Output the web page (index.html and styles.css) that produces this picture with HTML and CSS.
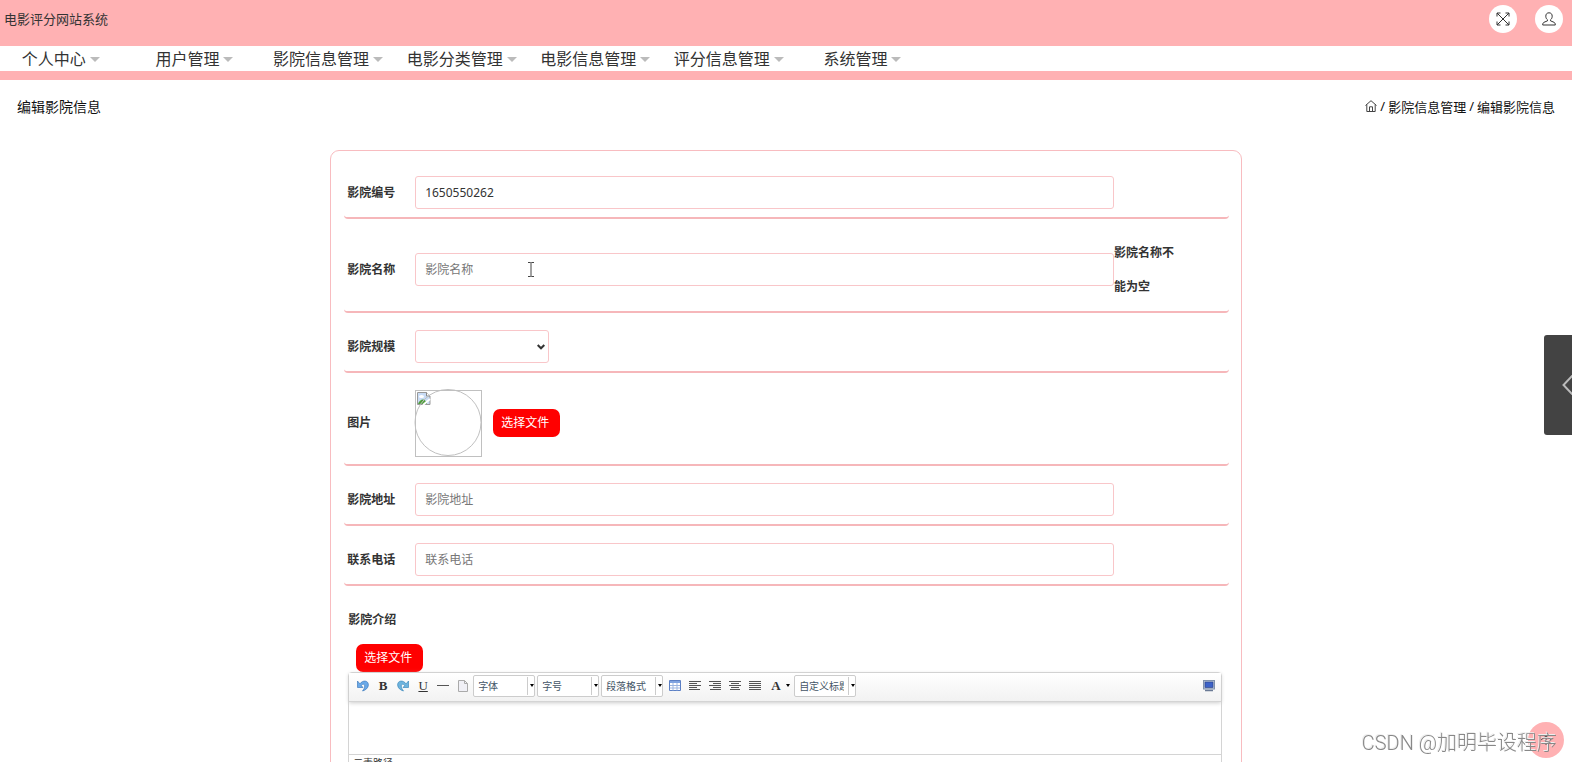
FILE: index.html
```html
<!DOCTYPE html>
<html lang="zh-CN">
<head>
<meta charset="utf-8">
<title>电影评分网站系统</title>
<link rel="stylesheet" href="styles.css">
</head>
<body>
<header class="topbar">
  <span class="brand">电影评分网站系统</span>
  <div class="top-actions">
    <button class="round-btn" type="button" aria-label="全屏">
      <svg width="14" height="14" viewBox="0 0 14 14" fill="none" stroke="#333"><path d="M1 1l12 12M13 1L1 13M1 4.500V1h3.500M9.500 1H13v3.500M13 9.500V13H9.500M4.500 13H1V9.500"/></svg>
    </button>
    <button class="round-btn" type="button" aria-label="用户">
      <svg width="14" height="14" viewBox="0 0 14 14" fill="none" stroke="#333"><path d="M7 .8c-2 0-3.200 1.300-3.200 3.400 0 1.600.7 2.900 1.700 3.600v1L2 10.300C1 10.800.7 11.700.7 13h12.600c0-1.300-.3-2.200-1.300-2.700L8.500 8.800v-1c1-.7 1.700-2 1.700-3.600C10.200 2.100 9 .8 7 .8z"/></svg>
    </button>
  </div>
</header>
<nav class="menu">
  <a class="menu-item" href="#">个人中心</a>
  <a class="menu-item" href="#">用户管理</a>
  <a class="menu-item" href="#">影院信息管理</a>
  <a class="menu-item" href="#">电影分类管理</a>
  <a class="menu-item" href="#">电影信息管理</a>
  <a class="menu-item" href="#">评分信息管理</a>
  <a class="menu-item" href="#">系统管理</a>
</nav>
<div class="page-head">
  <h1 class="page-title">编辑影院信息</h1>
  <div class="crumbs">
    <a href="#" aria-label="首页"><svg width="12" height="12" viewBox="0 0 12 12" fill="none" stroke="#444"><path d="M.5 5.500L6 .7l5.500 4.800M1.800 4.500v7h8.400v-7M4.500 11.500V6.800h3v4.700"/></svg></a>
    <span>/</span>
    <a href="#">影院信息管理</a>
    <span>/</span>
    <span>编辑影院信息</span>
  </div>
</div>
<form class="card">
  <div class="row">
    <label class="label" for="no">影院编号</label>
    <input class="field" id="no" type="text" value="1650550262">
  </div>
  <div class="row">
    <label class="label" for="name">影院名称</label>
    <div class="field-wrap">
      <input class="field" id="name" type="text" placeholder="影院名称">
      <svg class="ibeam" width="8" height="15" viewBox="0 0 8 15" fill="none" stroke="#444"><path d="M1 .5h2.500l.5.500.5-.500H7M4 1v13M1 14.500h2.500l.5-.500.5.500H7"/></svg>
    </div>
    <span class="error">影院名称不能为空</span>
  </div>
  <div class="row">
    <label class="label" for="scale">影院规模</label>
    <div class="select-wrap">
      <select class="select" id="scale"><option></option></select>
      <svg class="chevron" width="8" height="6" viewBox="0 0 8 6" fill="none" stroke="#333" stroke-width="2"><path d="M.7 1L4 4.300 7.300 1"/></svg>
    </div>
  </div>
  <div class="row">
    <span class="label">图片</span>
    <svg class="thumb" width="67" height="67" viewBox="0 0 67 67" fill="none">
      <rect x=".5" y=".5" width="66" height="66" stroke="#c0c0c0"/>
      <path d="M2.500 2.500h9l3.500 3.500v8.500H2.500z" fill="#c9dcf6" stroke="#999"/>
      <path d="M11.500 2.500V6H15" fill="#fff" stroke="#888"/>
      <ellipse cx="6.500" cy="6.500" rx="2.500" ry="1.500" fill="#fff"/>
      <path d="M3 14c1-3 3-4.500 5-4.500S11 11 12 14z" fill="#4f9e3c"/>
      <path d="M8 15l7-6" stroke="#fff" stroke-width="2"/>
      <circle cx="33" cy="32.500" r="33" stroke="#c0c0c0"/>
    </svg>
    <button class="file-btn" type="button">选择文件</button>
  </div>
  <div class="row">
    <label class="label" for="addr">影院地址</label>
    <input class="field" id="addr" type="text" placeholder="影院地址">
  </div>
  <div class="row">
    <label class="label" for="tel">联系电话</label>
    <input class="field" id="tel" type="text" placeholder="联系电话">
  </div>
  <div class="intro">
    <label class="intro-label" for="intro">影院介绍</label>
    <button class="file-btn intro-btn" type="button">选择文件</button>
    <div class="editor">
      <div class="toolbar">
        <button class="tool" type="button" aria-label="撤销"><svg width="12" height="12" viewBox="0 0 12 12"><path d="M.5 1v6.500h5.500L4.300 5.600C5.500 3.600 7.800 4 7.700 6c-.1 2-1 3.500-2.200 5 3-.8 5.700-2.800 5.900-6C11.500.5 6-.5 2.900 3.800z" fill="#6aa9e8" stroke="#2f6fb5" stroke-width=".6"/></svg></button>
        <button class="tool tool-text" type="button"><b>B</b></button>
        <button class="tool" type="button" aria-label="重做"><svg width="12" height="12" viewBox="0 0 12 12"><path d="M11.500 1v6.500H6l1.700-1.900C6.500 3.600 4.200 4 4.300 6c.1 2 1 3.500 2.200 5C3.500 10.200.8 8.200.6 5 .5.5 6-.5 9.100 3.800z" fill="#6fb4de" stroke="#2f7fb5" stroke-width=".6"/></svg></button>
        <button class="tool tool-text" type="button"><u>U</u></button>
        <button class="tool" type="button" aria-label="分隔线"><svg width="12" height="12" viewBox="0 0 12 12"><path d="M0 5.500h12" stroke="#555"/></svg></button>
        <button class="tool" type="button" aria-label="新建"><svg width="12" height="12" viewBox="0 0 12 12"><path d="M1.500.5h6l3 3v8h-9z" fill="#f0f0f6" stroke="#aaa"/><path d="M7.500.5v3h3" fill="none" stroke="#aaa"/></svg></button>
        <span class="combo"><select aria-label="字体"><option>字体</option></select></span>
        <span class="combo"><select aria-label="字号"><option>字号</option></select></span>
        <span class="combo"><select aria-label="段落格式"><option>段落格式</option></select></span>
        <button class="tool" type="button" aria-label="表格"><svg width="12" height="12" viewBox="0 0 12 12"><path d="M.5.5h11v10H.5z" fill="#fff" stroke="#5b7fc4"/><path d="M1 1h10v2H1z" fill="#7fa3e0"/><path d="M1 5.500h10M1 8h10M4 3v7.500M8 3v7.500" stroke="#9bb5e0"/></svg></button>
        <button class="tool" type="button" aria-label="左对齐"><svg width="12" height="12" viewBox="0 0 12 12"><path d="M0 1.500h12M0 3.500h8M0 5.500h12M0 7.500h8M0 9.500h11" stroke="#555"/></svg></button>
        <button class="tool" type="button" aria-label="右对齐"><svg width="12" height="12" viewBox="0 0 12 12"><path d="M0 1.500h12M4 3.500h8M0 5.500h12M4 7.500h8M1 9.500h11" stroke="#555"/></svg></button>
        <button class="tool" type="button" aria-label="居中"><svg width="12" height="12" viewBox="0 0 12 12"><path d="M0 1.500h12M2 3.500h8M0 5.500h12M2 7.500h8M1 9.500h10" stroke="#555"/></svg></button>
        <button class="tool" type="button" aria-label="两端对齐"><svg width="12" height="12" viewBox="0 0 12 12"><path d="M0 1.500h12M0 3.500h12M0 5.500h12M0 7.500h12M0 9.500h12" stroke="#555"/></svg></button>
        <button class="tool tool-text tool-color" type="button"><b>A</b></button>
        <span class="combo"><select aria-label="自定义标题"><option>自定义标题</option></select></span>
        <button class="tool tool-full" type="button" aria-label="全屏编辑"><svg width="12" height="12" viewBox="0 0 12 12"><rect x=".5" y=".5" width="11" height="8.500" fill="#b9c6da" stroke="#8192ac"/><rect x="2" y="2" width="8" height="5.500" fill="#3c62c8" stroke="#2a3f80" stroke-width=".6"/><path d="M2 10.500h8" stroke="#6a7a95" stroke-width="1.500"/></svg></button>
      </div>
      <textarea class="editor-area" id="intro"></textarea>
      <div class="editor-status">元素路径</div>
    </div>
  </div>
</form>
<button class="side-tab" type="button" aria-label="展开"><svg width="10" height="20" viewBox="0 0 10 20" fill="none" stroke="#bbb" stroke-width="2"><path d="M11 0L1.500 10 11 20"/></svg></button>
<button class="fab" type="button" aria-label="返回顶部"><svg width="16" height="12" viewBox="0 0 16 12" fill="none" stroke="#555"><path d="M0 1.500h16M3 6l5-4 5 4M8 2v9"/></svg></button>
<div class="watermark">CSDN @加明毕设程序</div>
</body>
</html>
```
FILE: styles.css
```css
* { box-sizing: border-box; }

body {
  margin: 0;
  height: 100vh;
  overflow: hidden;
  background: #fff;
  color: #333;
  font-family: "Noto Sans", "Noto Sans CJK SC", sans-serif;
  font-size: 12px;
}

button, input, select, textarea { font: inherit; color: inherit; }
button { border: 0; padding: 0; cursor: pointer; }
a { color: inherit; text-decoration: none; }
svg { display: block; flex: none; }

.topbar {
  display: flex;
  justify-content: space-between;
  align-items: flex-start;
  height: 46px;
  padding: 5px 9px 0 4px;
  background: #ffb1b3;
}
.brand { font-size: 13px; line-height: 28px; }
.top-actions { display: flex; gap: 18px; }
.round-btn {
  display: grid;
  place-items: center;
  width: 28px;
  height: 28px;
  border-radius: 50%;
  background: #fff;
}

.menu {
  display: flex;
  height: 34px;
  border-bottom: 9px solid #ffb1b3;
}
.menu-item {
  display: flex;
  align-items: center;
  justify-content: center;
  gap: 4px;
  width: 8.5%;
  padding: 1px 12px 0 0;
  font-size: 16px;
  line-height: 24px;
  white-space: nowrap;
}
.menu-item::after {
  content: "";
  border: 5px solid transparent;
  border-top-color: #bbb;
  border-bottom: 0;
}

.page-head {
  display: flex;
  justify-content: space-between;
  align-items: center;
  height: 52px;
  padding: 0 17px;
  color: #111;
}
.page-title { margin: 0; font-size: 14px; font-weight: 400; }
.crumbs { display: flex; align-items: center; gap: 3px; font-size: 13px; }

.card {
  width: 58%;
  margin: 18px auto 0;
  padding: 8px 12px 20px 13px;
  border: 1px solid #f8bcc0;
  border-radius: 9px;
}
.row {
  display: flex;
  align-items: center;
  padding: 17px 0 8px;
  border-bottom: 2px solid #f6b7ba;
  border-radius: 4px;
}
.label {
  flex: none;
  width: 71px;
  padding: 0 0 2px 3px;
  font-weight: 700;
}
.field, .field-wrap { width: 79%; flex: none; }
.field-wrap { position: relative; }
.field-wrap .field { width: 100%; display: block; }
.field {
  height: 33px;
  padding: 0 9px;
  border: 1px solid #f9c6c9;
  border-radius: 3px;
  background: #fff;
}
.field::placeholder { color: #777; opacity: 1; }
.ibeam { position: absolute; left: 112px; top: 9px; }
.error {
  flex: none;
  width: 68px;
  margin-bottom: -1px;
  font-weight: 700;
  line-height: 34px;
}

.select-wrap { position: relative; width: 134px; }
.select {
  display: block;
  width: 100%;
  height: 33px;
  border: 1px solid #f9c6c9;
  border-radius: 3px;
  background: #fff;
  appearance: none;
}
.chevron { position: absolute; right: 4px; top: 14px; pointer-events: none; }

.thumb { margin-bottom: -1px; overflow: visible; }
.file-btn {
  height: 28px;
  margin-left: 11px;
  padding: 0 11px 2px 8px;
  border-radius: 7px;
  background: #f00;
  color: #fff;
}

.intro { padding: 17px 7px 0 4px; }
.intro-label { display: block; font-weight: 700; line-height: 33px; }
.intro-btn { display: block; margin: 8px 0 0 8px; }

.editor { border: 1px solid #d4d4d4; border-radius: 4px; }
.toolbar {
  display: flex;
  align-items: center;
  height: 29px;
  padding: 0 2px 3px 4px;
  border-bottom: 1px solid #d4d4d4;
  background: linear-gradient(#fff, #f2f2f2);
  box-shadow: 0 1px 4px #ccc;
}
.tool {
  display: grid;
  place-items: center;
  flex: none;
  width: 20px;
  height: 20px;
  background: none;
}
.tool-text { font-family: "Liberation Serif", serif; font-size: 13px; line-height: 20px; }
.tool-color { display: flex; align-items: center; gap: 5px; width: 29px; padding-left: 6px; }
.tool-color::after {
  content: "";
  border: 2px solid transparent;
  border-top: 3px solid #000;
  border-bottom: 0;
}
.tool-full { margin-left: auto; }
.combo {
  display: flex;
  align-items: center;
  flex: none;
  width: 62px;
  height: 22px;
  margin-right: 2px;
  border: 1px solid #ccc;
  border-radius: 2px;
  background: #fff;
}
.combo select {
  width: 54px;
  height: 18px;
  padding: 0 4px;
  border: 0;
  border-right: 1px solid #ccc;
  background: none;
  color: #456;
  font-size: 10px;
  appearance: none;
}
.combo::after {
  content: "";
  margin-left: 2px;
  border: 2px solid transparent;
  border-top: 3px solid #000;
  border-bottom: 0;
}
.editor-area {
  display: block;
  width: 100%;
  height: 52px;
  border: 0;
  background: none;
  resize: none;
}
.editor-status {
  padding: 0 4px;
  border-top: 1px solid #d4d4d4;
  font-size: 10px;
  line-height: 16px;
}

.side-tab {
  position: fixed;
  right: 0;
  top: 335px;
  display: flex;
  align-items: center;
  justify-content: flex-end;
  width: 28px;
  height: 100px;
  border-radius: 3px 0 0 3px;
  background: #434343;
}
.fab {
  position: fixed;
  right: 8px;
  bottom: 4px;
  display: grid;
  place-items: center;
  width: 36px;
  height: 36px;
  border-radius: 50%;
  background: #ffb1b3;
}
.watermark {
  position: fixed;
  right: 15px;
  bottom: 4px;
  color: #888;
  font-family: Roboto, "Noto Sans CJK SC", sans-serif;
  font-size: 20px;
  font-weight: 300;
  line-height: 30px;
  text-shadow: -1px -1px 0 #eee;
  pointer-events: none;
}
```
